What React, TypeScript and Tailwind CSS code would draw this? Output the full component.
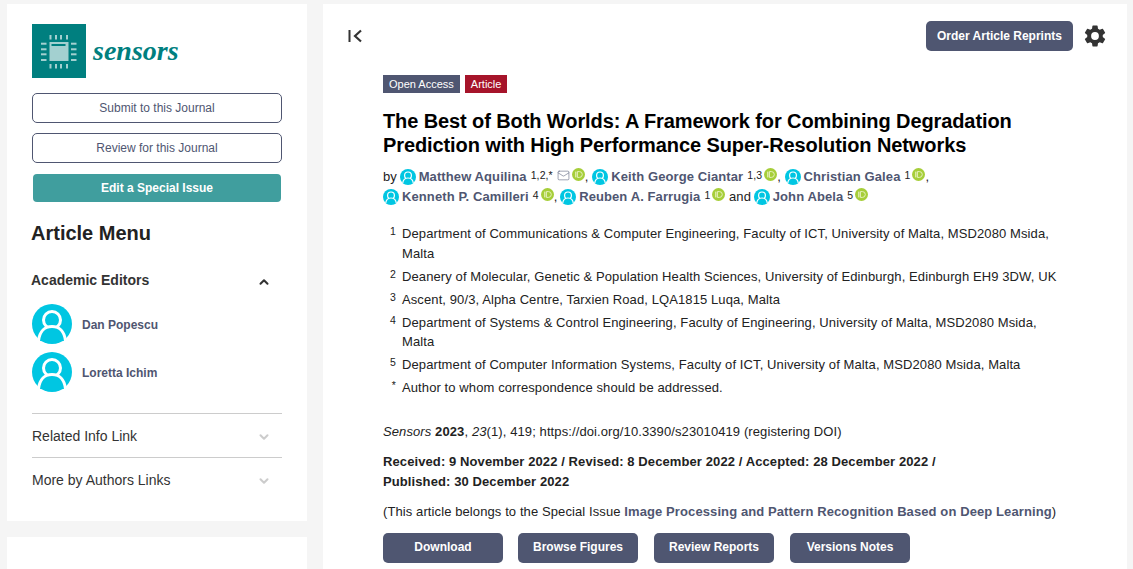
import { ChevronDown, ChevronUp, Mail } from "lucide-react";

function PersonIcon({ size }: { size: number }) {
  return (
    <svg width={size} height={size} viewBox="0 0 40 40" className="shrink-0">
      <circle cx="20" cy="20" r="20" fill="#00c6e2" />
      <circle cx="20" cy="16" r="8.5" fill="#00c6e2" stroke="#fff" strokeWidth="3" />
      <path d="M6.5 37c1-10 6.500-14.500 13.500-14.500s12.500 4.500 13.500 14.500" fill="#00c6e2" stroke="#fff" strokeWidth="3" />
    </svg>
  );
}

function Orcid() {
  return (
    <svg width="13" height="13" viewBox="0 0 13 13" className="shrink-0 mb-[5px]">
      <circle cx="6.5" cy="6.5" r="6.5" fill="#a6ce39" />
      <rect x="3.2" y="3.6" width="1.2" height="5.8" fill="#e6f1bd" />
      <path d="M5.4 3.6h2a2.9 2.9 0 0 1 0 5.8h-2z" fill="none" stroke="#e6f1bd" strokeWidth="1" />
    </svg>
  );
}

function Author({ name, sup, mail }: { name: string; sup: string; mail?: boolean }) {
  return (
    <span className="inline-flex items-center">
      <PersonIcon size={16} />
      <span className="ml-[3px] font-bold text-[#4f5671]">{name}</span>
      <span className="ml-[4px] -translate-y-[2px] text-[10.5px] leading-none text-[#222]">{sup}</span>
      {mail && <Mail size={13} strokeWidth={1} className="ml-[4px] -translate-y-[2px] text-[#4f5671]" />}
      <span className="ml-[2px]"><Orcid /></span>
    </span>
  );
}

function Affiliation({ mark, children }: { mark: string; children: string }) {
  return (
    <div className="flex">
      <span className="mr-[6px] w-[13px] shrink-0 text-right text-[10.5px] leading-[15px] text-[#222]">{mark}</span>
      <span>{children}</span>
    </div>
  );
}

function ActionButton({ label, className }: { label: string; className?: string }) {
  return (
    <div className={`flex h-[30px] w-[120px] items-center justify-center rounded-[5px] bg-[#4f5671] pb-[2px] text-xs font-bold text-white ${className ?? ""}`}>
      {label}
    </div>
  );
}

export default function App() {
  const affiliations = [
    ["1", "Department of Communications & Computer Engineering, Faculty of ICT, University of Malta, MSD2080 Msida, Malta"],
    ["2", "Deanery of Molecular, Genetic & Population Health Sciences, University of Edinburgh, Edinburgh EH9 3DW, UK"],
    ["3", "Ascent, 90/3, Alpha Centre, Tarxien Road, LQA1815 Luqa, Malta"],
    ["4", "Department of Systems & Control Engineering, Faculty of Engineering, University of Malta, MSD2080 Msida, Malta"],
    ["5", "Department of Computer Information Systems, Faculty of ICT, University of Malta, MSD2080 Msida, Malta"],
    ["*", "Author to whom correspondence should be addressed."],
  ];

  return (
    <div className="flex h-[569px] w-[1133px] gap-[16px] overflow-hidden bg-[#f5f5f5] pl-[7px] pt-[4px] font-['Liberation_Sans',Arial,sans-serif] text-[#222]">
      {/* Left: sidebar */}
      <div className="flex w-[300px] shrink-0 flex-col gap-[16px]">
        <div className="h-[517px] shrink-0 bg-white px-[25px] pt-[20px]">
          <div className="flex items-center gap-[7px]">
            <svg width="54" height="54" viewBox="0 0 54 54" className="shrink-0">
              <rect width="54" height="54" fill="#007f7f" />
              <rect x="17.5" y="18" width="19" height="19" fill="#a3d0d0" />
              <rect x="19.5" y="20" width="14" height="2" fill="#007f7f" />
              <g fill="#a3d0d0">
                <rect x="17.5" y="11" width="2" height="4.5" />
                <rect x="23" y="11" width="2" height="4.5" />
                <rect x="28" y="11" width="2" height="4.5" />
                <rect x="34" y="11" width="2" height="4.5" />
                <rect x="17.5" y="40" width="2" height="4.5" />
                <rect x="23" y="40" width="2" height="4.5" />
                <rect x="28" y="40" width="2" height="4.5" />
                <rect x="34" y="40" width="2" height="4.5" />
                <rect x="9" y="18.7" width="5.5" height="2" />
                <rect x="9" y="24.3" width="5.5" height="2" />
                <rect x="9" y="29.3" width="5.5" height="2" />
                <rect x="9" y="35" width="5.5" height="2" />
                <rect x="39" y="18.7" width="5.5" height="2" />
                <rect x="39" y="24.3" width="5.5" height="2" />
                <rect x="39" y="29.3" width="5.5" height="2" />
                <rect x="39" y="35" width="5.5" height="2" />
              </g>
            </svg>
            <span className="font-['Liberation_Serif',serif] text-[28px] font-bold italic leading-none text-[#007f7f]">sensors</span>
          </div>

          <div className="mt-[15px] flex h-[30px] items-center justify-center rounded-[5px] border border-[#4f5671] text-xs text-[#4f5671]">Submit to this Journal</div>
          <div className="mt-[10px] flex h-[30px] items-center justify-center rounded-[5px] border border-[#4f5671] text-xs text-[#4f5671]">Review for this Journal</div>
          <div className="mx-px mt-[11px] flex h-[28px] items-center justify-center rounded-[4px] bg-[#409e9e] text-xs font-bold text-white">Edit a Special Issue</div>

          <h2 className="-ml-px mt-[19px] text-xl font-bold leading-[24px] text-[#222]">Article Menu</h2>

          <div className="mt-[26px] flex items-center justify-between pr-[11px]">
            <span className="-ml-px text-sm font-bold leading-[18px] text-[#333]">Academic Editors</span>
            <ChevronUp size={14} strokeWidth={3.5} className="mt-[3px] text-[#333]" />
          </div>
          <div className="mt-[15px] flex items-center gap-[10px]">
            <PersonIcon size={40} />
            <span className="mt-[2px] text-xs font-bold text-[#4f5671]">Dan Popescu</span>
          </div>
          <div className="mt-[8px] flex items-center gap-[10px]">
            <PersonIcon size={40} />
            <span className="mt-[2px] text-xs font-bold text-[#4f5671]">Loretta Ichim</span>
          </div>

          <div className="mt-[21px] flex h-[44px] items-center justify-between border-t border-[#ccc] pr-[11px] text-sm text-[#333]">
            <span>Related Info Link</span>
            <ChevronDown size={14} strokeWidth={3.5} className="mt-[3px] text-[#ccc]" />
          </div>
          <div className="flex h-[44px] items-center justify-between border-t border-[#ccc] pr-[11px] text-sm text-[#333]">
            <span>More by Authors Links</span>
            <ChevronDown size={14} strokeWidth={3.5} className="mt-[3px] text-[#ccc]" />
          </div>
        </div>
        <div className="flex-1 bg-white" />
      </div>

      {/* Right: article */}
      <div className="w-[804px] shrink-0 bg-white pl-[25px] pr-[19px]">
        <div className="flex h-[64px] items-center justify-between pt-[1px]">
          <svg width="16" height="14" viewBox="0 0 16 14" className="-mt-[1px]">
            <rect x="0.5" y="1" width="2" height="12" fill="#333" />
            <path d="M13 1.5 7 7l6 5.5" fill="none" stroke="#333" strokeWidth="2.2" />
          </svg>
          <div className="-mt-[2px] flex items-center gap-[9px]">
            <div className="flex h-[30px] w-[147px] items-center justify-center rounded-[5px] bg-[#4f5671] text-xs font-bold text-white">Order Article Reprints</div>
            <svg width="26" height="26" viewBox="0 0 24 24" fill="#333">
              <path d="M19.14 12.94c.04-.3.06-.61.06-.94s-.02-.64-.07-.94l2.03-1.58a.49.49 0 0 0 .12-.61l-1.92-3.32a.49.49 0 0 0-.59-.22l-2.39.96a7 7 0 0 0-1.62-.94l-.36-2.54a.48.48 0 0 0-.48-.41h-3.84a.48.48 0 0 0-.47.41l-.36 2.54c-.59.24-1.13.57-1.62.94l-2.39-.96a.49.49 0 0 0-.59.22L2.74 8.87a.48.48 0 0 0 .12.61l2.03 1.58c-.05.3-.09.63-.09.94s.02.64.07.94l-2.03 1.58a.49.49 0 0 0-.12.61l1.92 3.32c.12.22.37.29.59.22l2.39-.96c.5.38 1.03.7 1.62.94l.36 2.54c.05.24.24.41.48.41h3.84c.24 0 .44-.17.47-.41l.36-2.54c.59-.24 1.13-.56 1.62-.94l2.39.96c.22.08.47 0 .59-.22l1.92-3.32a.48.48 0 0 0-.12-.61zM12 15.6A3.6 3.6 0 1 1 12 8.4a3.6 3.6 0 0 1 0 7.2z" />
            </svg>
          </div>
        </div>

        <div className="pl-[35px]">
          <div className="mt-[7px] flex gap-[5px] text-[11px] leading-[18px] text-white">
            <span className="bg-[#4f5671] px-[6px]">Open Access</span>
            <span className="bg-[#a6142a] px-[6px]">Article</span>
          </div>

          <h1 className="mt-[16px] w-[660px] text-xl font-bold leading-[24px] tracking-[-0.1px] text-black">
            The Best of Both Worlds: A Framework for Combining Degradation Prediction with High Performance Super-Resolution Networks
          </h1>

          <div className="mt-[10px] w-[660px] text-[13px] leading-[20px] tracking-[0.1px]">
            <div className="flex items-center whitespace-pre">
              <span className="-mr-px">by </span><Author name="Matthew Aquilina" sup="1,2,*" mail /><span>, </span>
              <Author name="Keith George Ciantar" sup="1,3" /><span>, </span>
              <Author name="Christian Galea" sup="1" /><span>,</span>
            </div>
            <div className="flex items-center whitespace-pre">
              <Author name="Kenneth P. Camilleri" sup="4" /><span className="-mr-px">, </span>
              <Author name="Reuben A. Farrugia" sup="1" /><span className="-mr-px"> and </span>
              <Author name="John Abela" sup="5" />
            </div>
          </div>

          <div className="mt-[17px] flex w-[680px] flex-col gap-[3.5px] text-[13px] leading-[19.5px] tracking-[0.1px]">
            {affiliations.map(([mark, text]) => (
              <Affiliation key={mark} mark={mark}>{text}</Affiliation>
            ))}
          </div>

          <div className="mt-[24px] text-[13px] leading-[19px] tracking-[0.1px]">
            <em>Sensors</em> <b>2023</b>, <em>23</em>(1), 419; https://doi.org/10.3390/s23010419 (registering DOI)
          </div>
          <div className="mt-[11px] w-[600px] text-[13px] font-bold leading-[20px] tracking-[0.1px]">
            Received: 9 November 2022 / Revised: 8 December 2022 / Accepted: 28 December 2022 / Published: 30 December 2022
          </div>
          <div className="mt-[10px] text-[13px] leading-[20px] tracking-[0.1px]">
            (This article belongs to the Special Issue <span className="font-bold text-[#4f5671]">Image Processing and Pattern Recognition Based on Deep Learning</span>)
          </div>

          <div className="mt-[11px] flex gap-[16px]">
            <ActionButton label="Download" className="-mr-px" />
            <ActionButton label="Browse Figures" />
            <ActionButton label="Review Reports" />
            <ActionButton label="Versions Notes" />
          </div>
        </div>
      </div>
    </div>
  );
}
